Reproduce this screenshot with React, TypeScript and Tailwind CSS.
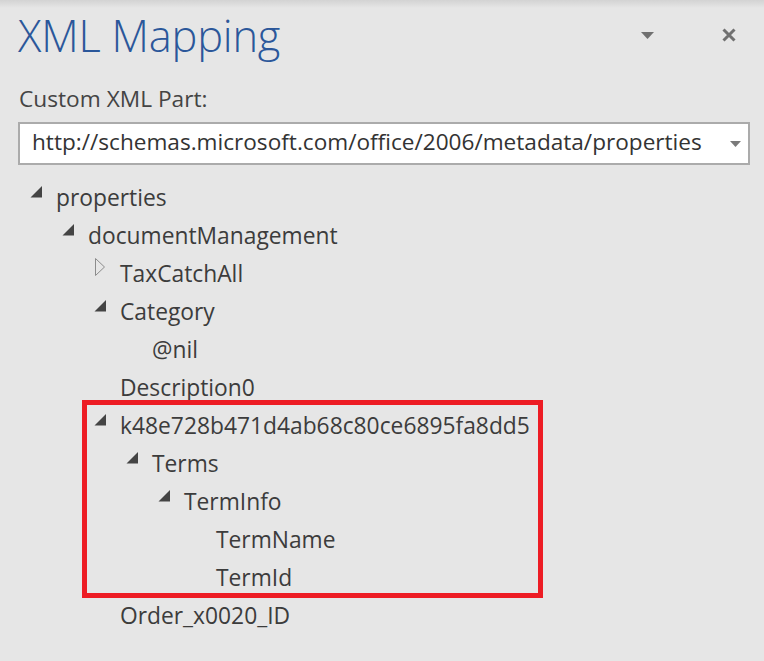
import React from "react";

type Node = {
  label: string;
  level: number;
  state: "open" | "closed" | "leaf";
};

const rowsBefore: Array<Node> = [
  { label: "properties", level: 0, state: "open" },
  { label: "documentManagement", level: 1, state: "open" },
  { label: "TaxCatchAll", level: 2, state: "closed" },
  { label: "Category", level: 2, state: "open" },
  { label: "@nil", level: 3, state: "leaf" },
  { label: "Description0", level: 2, state: "leaf" },
];

const rowsMarked: Array<Node> = [
  { label: "k48e728b471d4ab68c80ce6895fa8dd5", level: 2, state: "open" },
  { label: "Terms", level: 3, state: "open" },
  { label: "TermInfo", level: 4, state: "open" },
  { label: "TermName", level: 5, state: "leaf" },
  { label: "TermId", level: 5, state: "leaf" },
];

const rowsAfter: Array<Node> = [
  { label: "Order_x0020_ID", level: 2, state: "leaf" },
];

const indents = [
  "pl-[30px]",
  "pl-[62px]",
  "pl-[94px]",
  "pl-[126px]",
  "pl-[158px]",
  "pl-[190px]",
];

// expander glyph, drawn in row coordinates (row is 38px tall)
const Toggle = ({ state }: { state: Node["state"] }) => {
  if (state === "leaf") return <span className="w-[12px] shrink-0" />;
  return (
    <svg width="12" height="38" viewBox="0 0 12 38" className="shrink-0">
      {state === "open" ? (
        <polygon points="12,7 12,18.5 0.5,18.5" fill="#444444" />
      ) : (
        <polygon points="1.5,3.5 10.5,12 1.5,20.5" fill="none" stroke="#8c8c8c" strokeWidth="1" />
      )}
    </svg>
  );
};

const TreeRow = ({ node }: { node: Node }) => (
  <div className={`flex h-[38px] items-center ${indents[node.level]}`}>
    <Toggle state={node.state} />
    <span className="ml-[14px] whitespace-nowrap text-[22.8px] leading-none text-[#3c3c3c]">
      {node.label}
    </span>
  </div>
);

const App = () => {
  return (
    <div
      className="relative h-[661px] w-[764px] overflow-hidden bg-[#e6e6e6]"
      style={{ fontFamily: '"Open Sans", "Noto Sans", Arial, sans-serif' }}
    >
      <div className="h-[8px] bg-gradient-to-b from-[#d3d3d3] to-[#e6e6e6]" />

      <div className="flex items-start justify-between pl-[18px] pr-[28px] pt-[6px]">
        <h1 className="text-[43.4px] font-light leading-none tracking-[-0.2px] text-[#2b579a]">
          XML Mapping
        </h1>
        <div className="mt-[14px] flex h-[14px] items-center gap-[68px]">
          <svg width="13" height="7" viewBox="0 0 13 7">
            <polygon points="0,0 13,0 6.5,7" fill="#707070" />
          </svg>
          <svg width="14" height="14" viewBox="0 0 14 14">
            <path d="M1.5 1.5 L12.5 12.5 M12.5 1.5 L1.5 12.5" stroke="#707070" strokeWidth="3" />
          </svg>
        </div>
      </div>

      <div className="mt-[31px] pl-[19px] text-[22.7px] leading-none text-[#444444]">
        Custom XML Part:
      </div>

      <div className="ml-[18px] mt-[11px] flex h-[43px] w-[732px] items-center justify-between border-2 border-[#ababab] bg-white pb-[3px] pl-[12px] pr-[7px]">
        <span className="whitespace-nowrap text-[22.6px] leading-none text-[#333333]">
          http://schemas.microsoft.com/office/2006/metadata/properties
        </span>
        <svg width="11" height="6" viewBox="0 0 11 6" className="mt-[3px]">
          <polygon points="0,0 11,0 5.5,6" fill="#7a7a7a" />
        </svg>
      </div>

      <div className="mt-[14px]">
        {rowsBefore.map((n) => (
          <TreeRow key={n.label} node={n} />
        ))}
        <div className="relative">
          {rowsMarked.map((n) => (
            <TreeRow key={n.label} node={n} />
          ))}
          <div className="pointer-events-none absolute left-[82px] top-[-7px] h-[198px] w-[461px] border-[5px] border-[#ed1c24]" />
        </div>
        {rowsAfter.map((n) => (
          <TreeRow key={n.label} node={n} />
        ))}
      </div>
    </div>
  );
};

export default App;
